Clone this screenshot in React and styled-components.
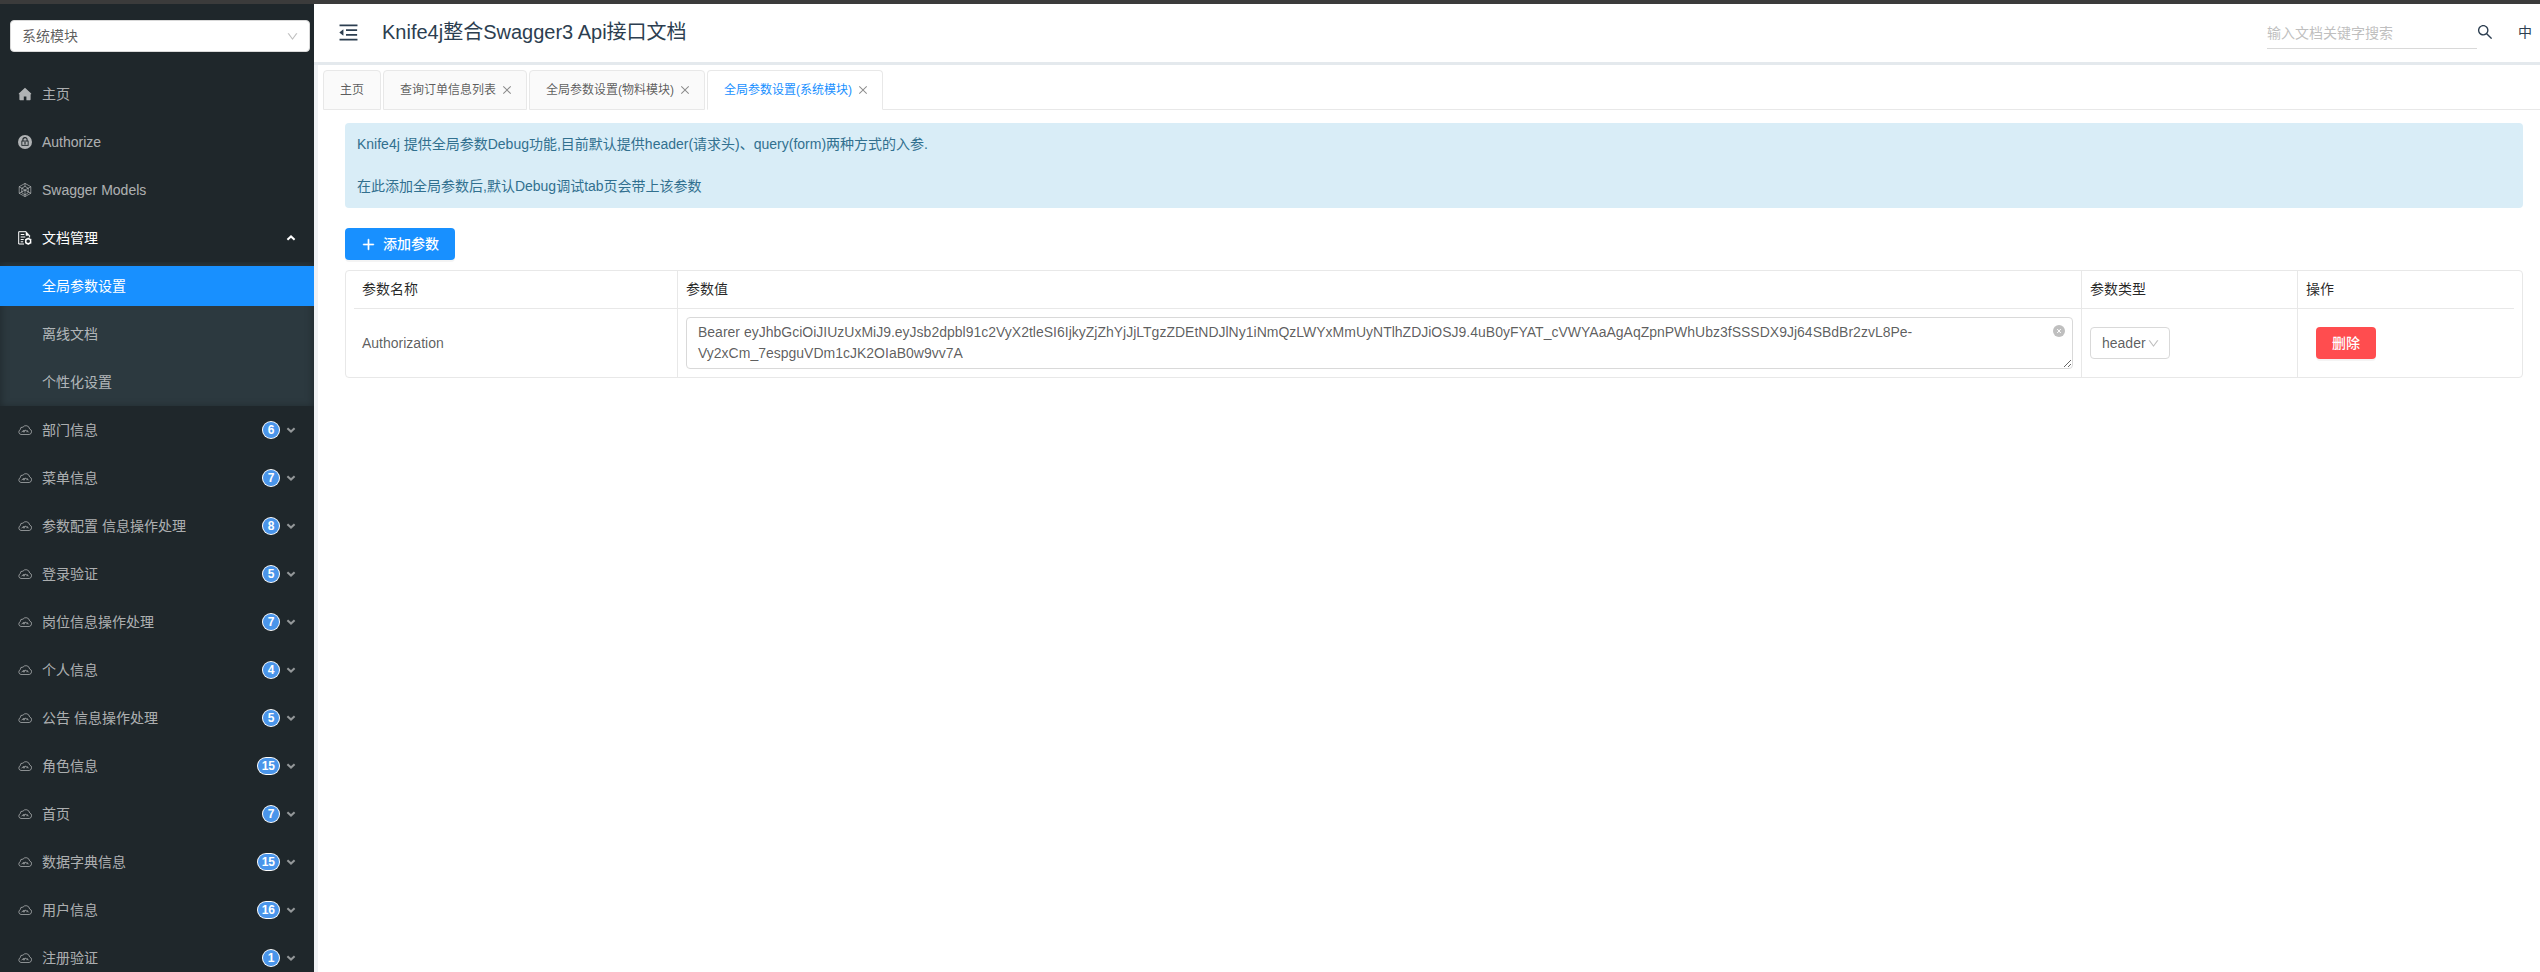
import React from "react";
import styled, { createGlobalStyle } from "styled-components";
import {
  AiOutlineClose,
  AiOutlineDown,
  AiOutlineMenuFold,
  AiOutlinePlus,
  AiOutlineSearch,
} from "react-icons/ai";

const GlobalStyle = createGlobalStyle`
  * {
    box-sizing: border-box;
  }

  body {
    margin: 0;
    overflow: hidden;
    color: rgba(0, 0, 0, 0.65);
    background: #fff;
    font-family: "Liberation Sans", "Noto Sans CJK SC", sans-serif;
    font-size: 14px;
    line-height: 1.5;
  }
`;

const Page = styled.div`
  height: 972px;
  display: flex;
  flex-direction: column;
  overflow: hidden;
`;

const TopEdge = styled.div`
  flex: none;
  height: 4px;
  background: #3b3b3b;
`;

const Layout = styled.div`
  flex: 1;
  min-height: 0;
  display: flex;
`;

const Sider = styled.aside`
  flex: none;
  width: 314px;
  overflow: hidden;
  background: #1f272b;
`;

const ModuleSelect = styled.div`
  display: flex;
  align-items: center;
  justify-content: space-between;
  height: 32px;
  margin: 16px 4px 0 10px;
  padding: 0 10px 0 11px;
  background: #fff;
  border: 1px solid #d9d9d9;
  border-radius: 4px;

  svg {
    color: #bfbfbf;
    font-size: 13px;
  }
`;

const Menu = styled.nav`
  display: flex;
  flex-direction: column;
  padding-top: 18px;
`;

const MenuItem = styled.div`
  flex: none;
  display: flex;
  align-items: center;
  height: 40px;
  margin: 4px 0;
  padding: 0 18px 0 18px;
  color: ${(props) => (props.$active ? "#fff" : "rgba(255, 255, 255, 0.65)")};
`;

const MenuIcon = styled.svg`
  flex: none;
  width: 14px;
  height: 14px;
  margin-right: 10px;
`;

const MenuText = styled.span`
  flex: 1;
`;

const Badge = styled.span`
  min-width: 16px;
  height: 16px;
  margin-right: 7px;
  padding: 0 4px;
  color: #fff;
  background: #4a95ea;
  border-radius: 8px;
  box-shadow: 0 0 0 1px #fff;
  font-size: 12px;
  font-weight: bold;
  line-height: 16px;
  text-align: center;
`;

const Arrow = styled.svg`
  width: 10px;
  height: 8px;
  opacity: ${(props) => (props.$dim ? 0.8 : 1)};
`;

const SubMenu = styled.div`
  padding: 4px 0;
  display: flex;
  flex-direction: column;
  gap: 8px;
  background: #2c393f;
  box-shadow: inset 0 2px 8px rgba(0, 0, 0, 0.35);
`;

const SubItem = styled.div`
  height: 40px;
  padding-left: 42px;
  line-height: 40px;
  color: ${(props) => (props.$active ? "#fff" : "rgba(255, 255, 255, 0.65)")};
  background: ${(props) => (props.$active ? "#1890ff" : "transparent")};
`;

const Main = styled.main`
  flex: 1;
  min-width: 0;
  display: flex;
  flex-direction: column;
`;

const Header = styled.header`
  flex: none;
  display: flex;
  align-items: center;
  height: 61px;
  padding: 0 8px 2px 23px;
  color: #2c3e50;
  background: #fff;
  border-bottom: 3px solid #e4e9ed;
`;

const FoldButton = styled.span`
  display: flex;
  margin: 1px 22px 0 0;
  font-size: 23px;
`;

const Title = styled.h1`
  flex: 1;
  margin: 0;
  font-size: 20px;
  font-weight: normal;
  line-height: 30px;
`;

const SearchInput = styled.input`
  width: 210px;
  height: 32px;
  padding: 0;
  margin-top: 2px;
  border: none;
  border-bottom: 1px solid #d9d9d9;
  outline: none;
  font: inherit;

  &::placeholder {
    color: #bfbfbf;
  }
`;

const SearchIcon = styled.span`
  display: flex;
  margin: 0 24px 0 -1px;
  font-size: 18px;
`;

const Language = styled.span`
  width: 14px;
`;

const Content = styled.div`
  flex: 1;
  border-left: 4px solid #f0f2f5;
`;

const Tabs = styled.div`
  display: flex;
  gap: 2px;
  height: 45px;
  padding: 5px 0 0 5px;
`;

const Tab = styled.div`
  flex: none;
  display: flex;
  align-items: center;
  height: 40px;
  padding: 0 ${(props) => (props.$closable ? 13 : 16)}px 0 16px;
  color: ${(props) => (props.$active ? "#1890ff" : "rgba(0, 0, 0, 0.65)")};
  background: ${(props) => (props.$active ? "#fff" : "#fafafa")};
  border: 1px solid #e8e8e8;
  border-bottom-color: ${(props) => (props.$active ? "#fff" : "#e8e8e8")};
  border-radius: 4px 4px 0 0;
  font-size: 12px;

  svg {
    margin-left: 5px;
    color: rgba(0, 0, 0, 0.45);
    font-size: 12px;
  }
`;

const TabFiller = styled.div`
  flex: 1;
  height: 40px;
  margin-left: -2px;
  border-bottom: 1px solid #e8e8e8;
`;

const Panel = styled.section`
  padding: 13px 17px 0 27px;
`;

const Notice = styled.div`
  height: 85px;
  padding: 11px 12px;
  color: #31708f;
  background: #d9edf7;
  border-radius: 4px;
  line-height: 21px;

  p {
    margin: 0 0 21px;
  }
`;

const Button = styled.button`
  display: flex;
  align-items: center;
  justify-content: center;
  gap: 7px;
  height: 32px;
  width: ${(props) => (props.$danger ? 60 : 110)}px;
  padding: 0;
  color: #fff;
  background: ${(props) => (props.$danger ? "#ff4d4f" : "#1890ff")};
  border: none;
  border-radius: 4px;
  box-shadow: 0 2px 0 rgba(0, 0, 0, 0.045);
  font: inherit;
  font-weight: 500;

  svg {
    font-size: 15px;
    stroke: currentColor;
    stroke-width: 40;
  }
`;

const Toolbar = styled.div`
  margin: 20px 0 10px;
`;

const Table = styled.div`
  display: grid;
  grid-template-columns: 15fr 65fr 10fr 10fr;
  height: 108px;
  grid-template-rows: 38px 68px;
  padding: 0 8px;
  border: 1px solid #e8e8e8;
  border-radius: 4px;
`;

const Cell = styled.div`
  display: flex;
  align-items: center;
  min-width: 0;
  padding: 0 8px;
  color: ${(props) => (props.$head ? "rgba(0, 0, 0, 0.85)" : "inherit")};
  border-right: ${(props) => (props.$last ? 0 : 1)}px solid #e8e8e8;
  border-bottom: ${(props) => (props.$head ? 1 : 0)}px solid #e8e8e8;

  ${Button} {
    margin-left: 10px;
  }
`;

const TextAreaWrap = styled.div`
  position: relative;
  flex: 1;
  height: 52px;

  svg {
    position: absolute;
    top: 8px;
    right: 8px;
    width: 12px;
    height: 12px;
  }
`;

const TextArea = styled.textarea`
  display: block;
  width: 100%;
  height: 52px;
  padding: 4px 24px 4px 11px;
  color: rgba(0, 0, 0, 0.65);
  border: 1px solid #d9d9d9;
  border-radius: 4px;
  outline: none;
  overflow: hidden;
  resize: vertical;
  font: inherit;
  line-height: 21px;
`;

const TypeSelect = styled.div`
  display: flex;
  align-items: center;
  gap: 1px;
  width: 80px;
  height: 32px;
  padding-left: 11px;
  border: 1px solid #d9d9d9;
  border-radius: 4px;

  svg {
    color: #bfbfbf;
    font-size: 13px;
  }
`;

const HomeIcon = () => (
  <MenuIcon viewBox="0 0 14 14" fill="currentColor">
    <path d="M7 .7 13.2 6.4V7.2H12.6V12.4Q12.6 13.2 11.8 13.2H8.4V9.6H5.8V13.2H2.2Q1.4 13.2 1.4 12.4V7.2H.8V6.4Z" />
  </MenuIcon>
);

const LockIcon = () => (
  <MenuIcon viewBox="0 0 14 14" fill="none">
    <circle cx="7" cy="7" r="7" fill="currentColor" />
    <path d="M4.9 6V4.7a2.1 2.1 0 0 1 4.2 0V6" stroke="#1f272b" strokeWidth="1.1" />
    <path d="M3.4 5.6h7.2v5.2H3.4z" fill="#1f272b" />
    <path d="M4.3 6.5h5.4v3.4H4.3z" fill="currentColor" />
    <path d="M7 6.8v2.6" stroke="#1f272b" strokeWidth="1.1" />
  </MenuIcon>
);

const ModelIcon = () => (
  <MenuIcon viewBox="0 0 14 14" fill="none" stroke="currentColor" strokeWidth=".7">
    <path d="M7 .4 12.8 3.7V10.3L7 13.6 1.2 10.3V3.7Z" />
    <path d="M7 .4V3.3M1.2 3.7 7 7l5.8-3.3M7 7v6.6M3.8 5.2v4.6L7 12l3.2-2.2V5.2L7 3.3 3.8 5.2M1.2 10.3 7 7l5.8 3.3" />
  </MenuIcon>
);

const DocIcon = () => (
  <MenuIcon viewBox="0 0 14 14" fill="none" stroke="currentColor">
    <path d="M6 13H.7V.7H8" />
    <path d="M8 .5 11.8 4.6H8Z" fill="currentColor" strokeWidth=".5" />
    <path d="M2.7 3.5h3.6M2.7 6h4.6M2.7 8.5h3M2.7 10.8h2.5M11.6 4.5v2" />
    <circle cx="10.2" cy="10.2" r="2.5" strokeWidth="1.4" />
    <path d="M10.2 6.6v1M10.2 12.8v1M7 8.4l.9.5M12.5 11.5l.9.5M13.4 8.4l-.9.5M7.9 11.5 7 12" />
  </MenuIcon>
);

const CloudIcon = () => (
  <MenuIcon viewBox="0 0 14 14" fill="none" stroke="currentColor" strokeWidth=".75">
    <path d="M3 11.5A2.6 2.6 0 0 1 2.3 6.6 2.4 2.4 0 0 1 5 4.1 3.7 3.7 0 0 1 11.6 5.9 2.9 2.9 0 0 1 11.2 11.5Z" />
    <path d="M3.5 9.3 5.4 7.4V9.3M6.4 9.3V7.5l1.2-.4.4 1M9 9.3V7.4l1.5 1.9" />
  </MenuIcon>
);

const MenuArrow = ({ up }) => (
  <Arrow viewBox="0 0 10 8" fill="none" stroke="currentColor" strokeWidth="2" $dim={!up}>
    <path d={up ? "M1.4 5.8 5 2.4l3.6 3.4" : "M1.4 2.2 5 5.6l3.6-3.4"} />
  </Arrow>
);

const ClearIcon = () => (
  <svg viewBox="0 0 12 12" fill="none">
    <circle cx="6" cy="6" r="6" fill="#bfbfbf" />
    <path d="M4.2 4 7.8 8M7.8 4 4.2 8" stroke="#fff" />
  </svg>
);

const groups = [
  { name: "部门信息", count: 6 },
  { name: "菜单信息", count: 7 },
  { name: "参数配置 信息操作处理", count: 8 },
  { name: "登录验证", count: 5 },
  { name: "岗位信息操作处理", count: 7 },
  { name: "个人信息", count: 4 },
  { name: "公告 信息操作处理", count: 5 },
  { name: "角色信息", count: 15 },
  { name: "首页", count: 7 },
  { name: "数据字典信息", count: 15 },
  { name: "用户信息", count: 16 },
  { name: "注册验证", count: 1 },
];

const tabs = [
  { title: "主页" },
  { title: "查询订单信息列表", closable: true },
  { title: "全局参数设置(物料模块)", closable: true },
  { title: "全局参数设置(系统模块)", closable: true, active: true },
];

const token =
  "Bearer eyJhbGciOiJIUzUxMiJ9.eyJsb2dpbl91c2VyX2tleSI6IjkyZjZhYjJjLTgzZDEtNDJlNy1iNmQzLWYxMmUyNTlhZDJiOSJ9.4uB0yFYAT_cVWYAaAgAqZpnPWhUbz3fSSSDX9Jj64SBdBr2zvL8Pe-Vy2xCm_7espguVDm1cJK2OIaB0w9vv7A";

const SideMenu = () => (
  <Sider>
    <ModuleSelect>
      系统模块
      <AiOutlineDown />
    </ModuleSelect>
    <Menu>
      <MenuItem>
        <HomeIcon />
        <MenuText>主页</MenuText>
      </MenuItem>
      <MenuItem>
        <LockIcon />
        <MenuText>Authorize</MenuText>
      </MenuItem>
      <MenuItem>
        <ModelIcon />
        <MenuText>Swagger Models</MenuText>
      </MenuItem>
      <MenuItem $active>
        <DocIcon />
        <MenuText>文档管理</MenuText>
        <MenuArrow up />
      </MenuItem>
      <SubMenu>
        <SubItem $active>全局参数设置</SubItem>
        <SubItem>离线文档</SubItem>
        <SubItem>个性化设置</SubItem>
      </SubMenu>
      {groups.map((group) => (
        <MenuItem key={group.name}>
          <CloudIcon />
          <MenuText>{group.name}</MenuText>
          <Badge>{group.count}</Badge>
          <MenuArrow />
        </MenuItem>
      ))}
    </Menu>
  </Sider>
);

const ParameterTable = () => (
  <Table>
    <Cell $head>参数名称</Cell>
    <Cell $head>参数值</Cell>
    <Cell $head>参数类型</Cell>
    <Cell $head $last>
      操作
    </Cell>
    <Cell>Authorization</Cell>
    <Cell>
      <TextAreaWrap>
        <TextArea defaultValue={token} spellCheck={false} />
        <ClearIcon />
      </TextAreaWrap>
    </Cell>
    <Cell>
      <TypeSelect>
        header
        <AiOutlineDown />
      </TypeSelect>
    </Cell>
    <Cell $last>
      <Button $danger>删除</Button>
    </Cell>
  </Table>
);

const App = () => {
  return (
    <Page>
      <GlobalStyle />
      <TopEdge />
      <Layout>
        <SideMenu />
        <Main>
          <Header>
            <FoldButton>
              <AiOutlineMenuFold />
            </FoldButton>
            <Title>Knife4j整合Swagger3 Api接口文档</Title>
            <SearchInput placeholder="输入文档关键字搜索" />
            <SearchIcon>
              <AiOutlineSearch />
            </SearchIcon>
            <Language>中</Language>
          </Header>
          <Content>
            <Tabs>
              {tabs.map((tab) => (
                <Tab key={tab.title} $active={tab.active} $closable={tab.closable}>
                  {tab.title}
                  {tab.closable && <AiOutlineClose />}
                </Tab>
              ))}
              <TabFiller />
            </Tabs>
            <Panel>
              <Notice>
                <p>Knife4j 提供全局参数Debug功能,目前默认提供header(请求头)、query(form)两种方式的入参.</p>
                <p>在此添加全局参数后,默认Debug调试tab页会带上该参数</p>
              </Notice>
              <Toolbar>
                <Button>
                  <AiOutlinePlus />
                  添加参数
                </Button>
              </Toolbar>
              <ParameterTable />
            </Panel>
          </Content>
        </Main>
      </Layout>
    </Page>
  );
};

export default App;
